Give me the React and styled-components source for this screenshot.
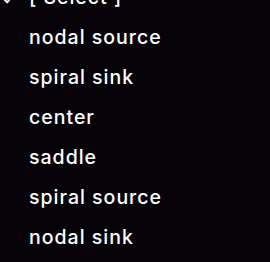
import React from "react";
import styled, { createGlobalStyle } from "styled-components";

const Global = createGlobalStyle`
  html, body { margin: 0; padding: 0; background: #050308; }
  body { width: 270px; height: 262px; overflow: hidden; }
`;

const Menu = styled.ul`
  list-style: none;
  margin: -23px 0 0 0;
  padding: 0;
  font-family: Inter, "Liberation Sans", Arial, sans-serif;
  font-size: 19.5px;
  font-weight: 500;
  color: #ffffff;
`;

const Item = styled.li`
  display: flex;
  align-items: center;
  height: 40px;
  line-height: 40px;
  letter-spacing: 1px;
  white-space: nowrap;
`;

const CheckSlot = styled.span`
  display: flex;
  align-items: center;
  width: 29px;
  padding-left: 3px;
  box-sizing: border-box;
  flex: none;
  margin-top: 4px;
`;

const items = ["[ Select ]", "nodal source", "spiral sink", "center", "saddle", "spiral source", "nodal sink"];

export default function App() {
  return (
    <>
      <Global />
      <Menu>
        {items.map((t, i) => (
          <Item key={t}>
            <CheckSlot>
              {i === 0 && (
                <svg width="11" height="10" viewBox="0 0 11 10">
                  <path d="M1.2 5.3 L4.2 8.4 L9.8 1.2" fill="none" stroke="#fff" strokeWidth="2" strokeLinecap="round" strokeLinejoin="round" />
                </svg>
              )}
            </CheckSlot>
            {t}
          </Item>
        ))}
      </Menu>
    </>
  );
}
